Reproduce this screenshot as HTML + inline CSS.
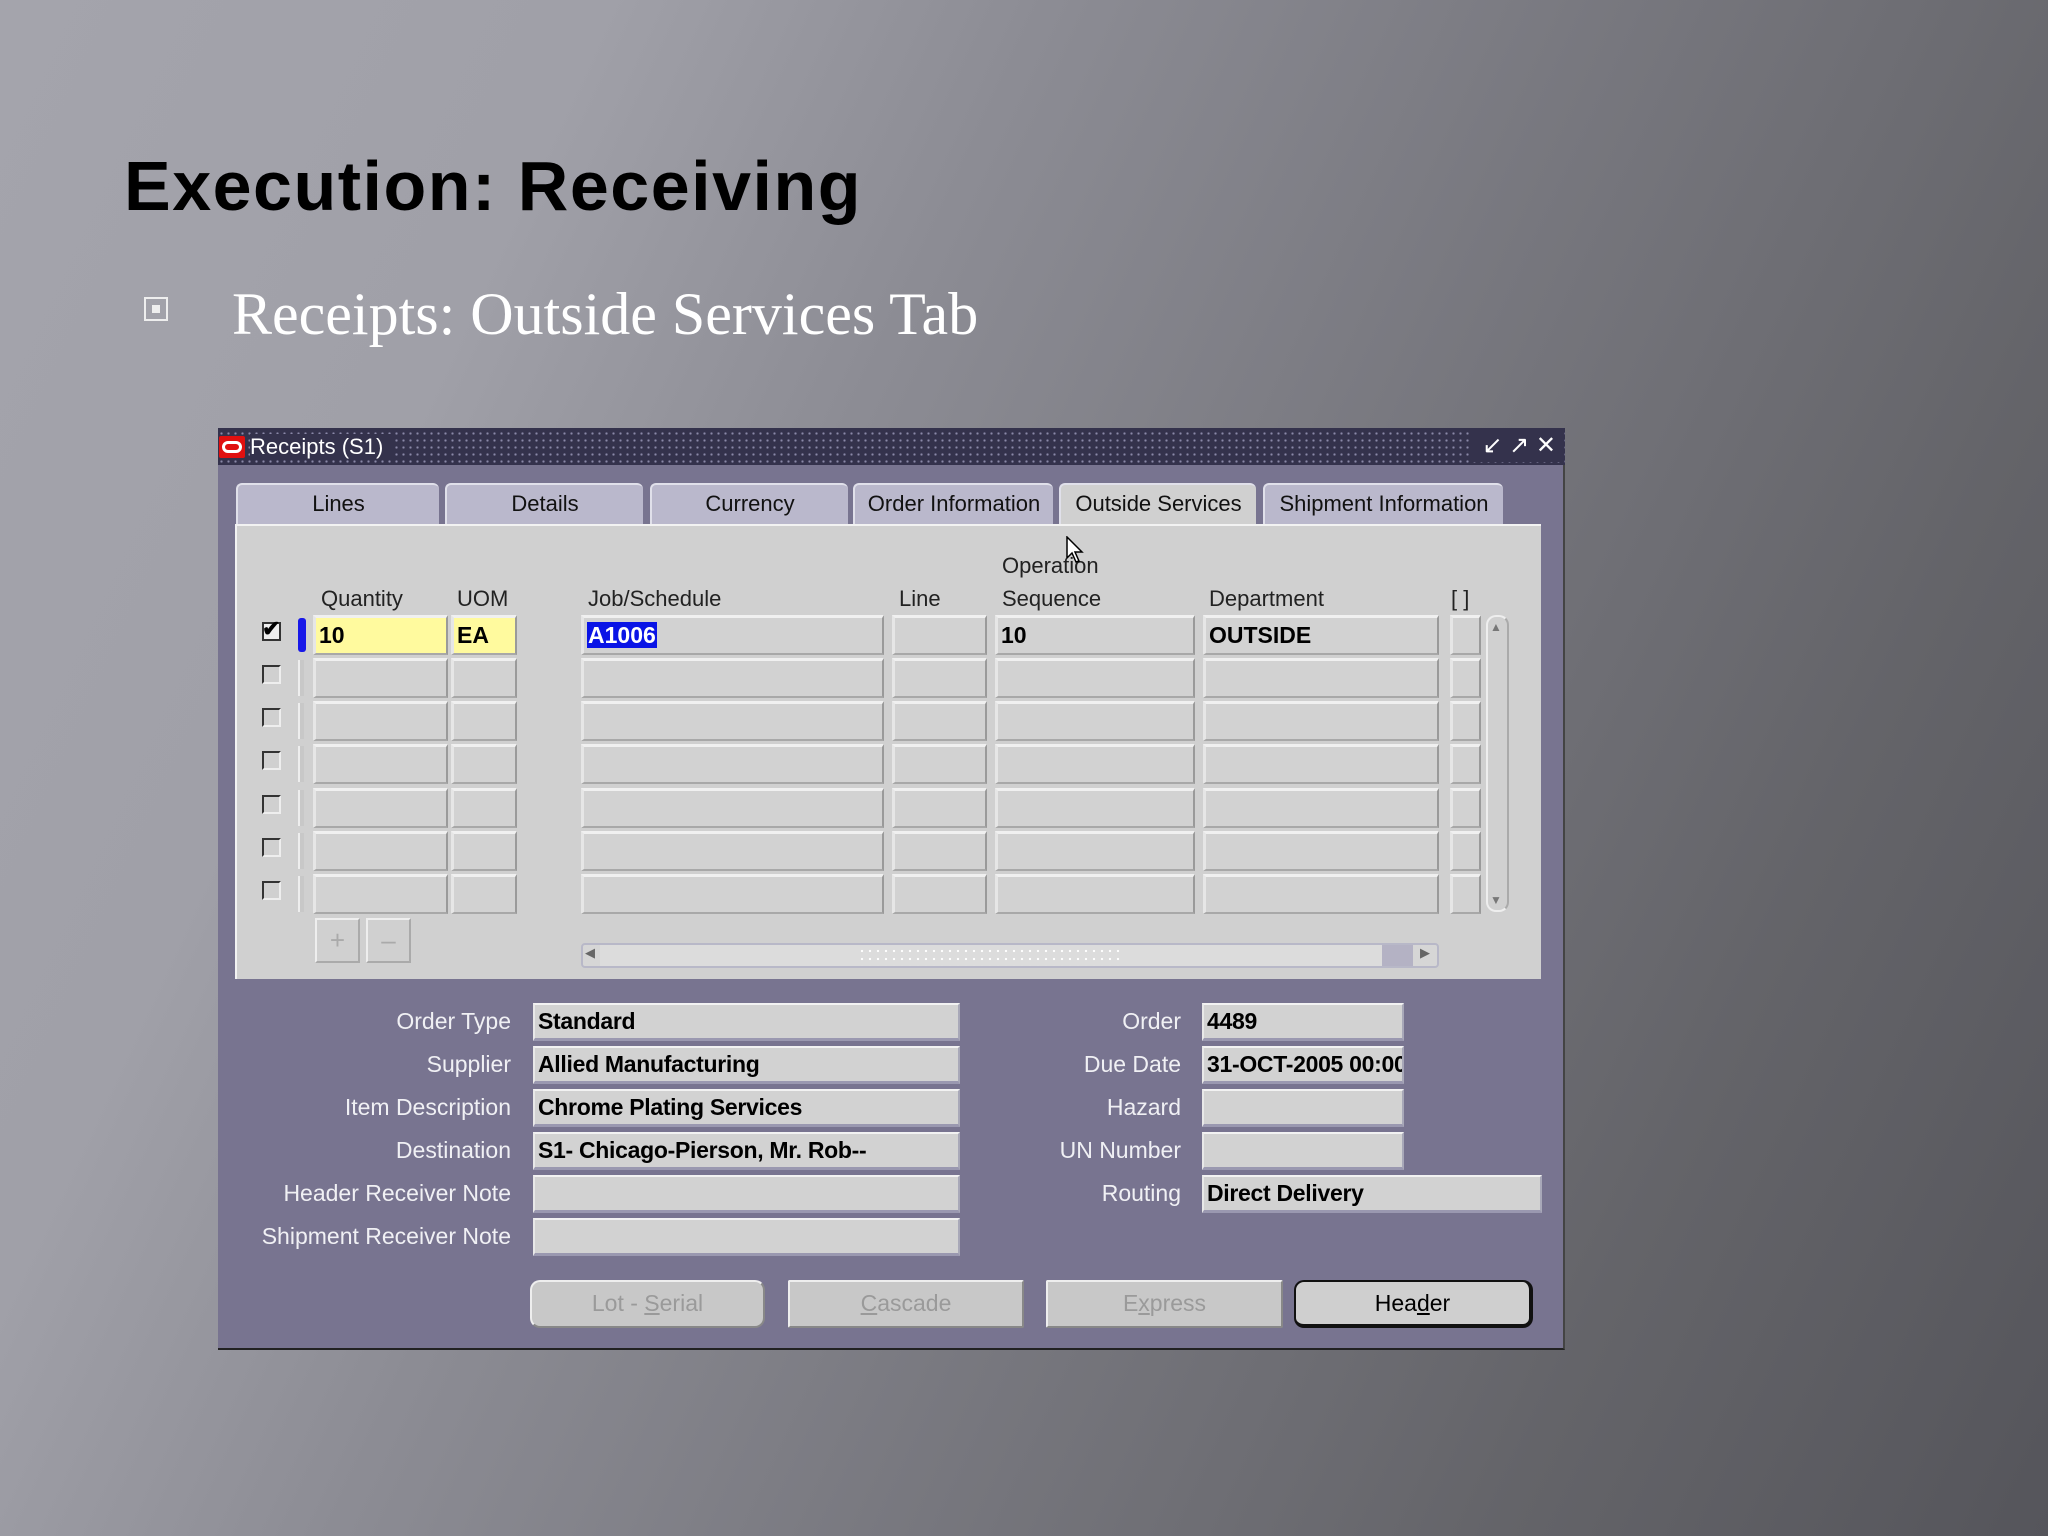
<!DOCTYPE html>
<html><head><meta charset="utf-8"><style>
*{margin:0;padding:0;box-sizing:border-box}
body{width:2048px;height:1536px;overflow:hidden;position:relative;
background:linear-gradient(115deg,#a4a4ac 0%,#a0a0a8 22%,#8c8c94 38%,#78787f 58%,#646469 80%,#55555b 100%);font-family:"Liberation Sans Narrow","Liberation Sans",sans-serif}
.a{position:absolute}
.h1{left:124px;top:146px;font:bold 70px "Liberation Sans",sans-serif;color:#000;letter-spacing:1.5px;white-space:nowrap}
.h2{left:232px;top:280px;font:60px "Liberation Serif",serif;color:#fff;white-space:nowrap}
.win{left:218px;top:428px;width:1347px;height:922px;background:#787490;border-right:2px solid #444;border-bottom:2px solid #222}
.tb{left:218px;top:428px;width:1347px;height:37px;background:#34324c;
background-image:radial-gradient(#8a88a8 1px,transparent 1.3px);background-size:7px 7px;background-position:0 2px}
.tt{left:250px;top:434px;color:#fff;font-size:22px;background:#34324c;padding-right:8px}
.tab{background:#bab8cc;border-radius:6px 6px 0 0;border-top:2px solid #e0e0ea;border-left:2px solid #e0e0ea;height:41px;top:483px;text-align:center;font-size:22px;line-height:38px;color:#111}
.pan{left:235px;top:524px;width:1306px;height:455px;background:#d0d0d0;border-top:2px solid #f2f2f2;border-left:2px solid #f2f2f2}
.c{background:#d2d2d2;border-top:3px solid #f0f0f0;border-left:3px solid #e6e6e6;border-right:2px solid #9a9a9a;border-bottom:2px solid #a8a8a8;height:40px;font-weight:bold;font-size:23px;line-height:34px;padding-left:3px;color:#000}
.y{background:#fffa9e}
.lb{font-size:22px;color:#222}
.f{background:#d2d2d2;border-top:2px solid #f2f2f2;border-left:2px solid #e8e8e8;border-bottom:3px solid #9a98b0;border-right:2px solid #a8a8b8;height:38px;font-weight:bold;font-size:23px;line-height:32px;padding-left:3px;color:#000;white-space:nowrap;overflow:hidden;letter-spacing:-0.3px}
.fl{font-size:23px;color:#f0f0f4;text-align:right;white-space:nowrap}
.cb{width:19px;height:19px;border:2px solid #333;border-right-color:#eee;border-bottom-color:#eee;background:#d0d0d0}
.btn{top:1280px;height:48px;background:#c8c8c8;border:2px solid #eee;border-right-color:#888;border-bottom-color:#888;border-radius:10px;text-align:center;font-size:23px;line-height:42px;color:#9a9a9a}
</style></head><body>
<div class="a h1">Execution: Receiving</div>
<div class="a" style="left:144px;top:297px;width:24px;height:24px;border:2px solid #eee"><div style="position:absolute;left:6px;top:6px;width:8px;height:8px;background:#eee"></div></div>
<div class="a h2">Receipts: Outside Services Tab</div>

<div class="a win"></div>
<div class="a tb"></div>
<div class="a" style="left:219px;top:436px;width:26px;height:22px;background:#e01010;border-radius:2px"><div style="position:absolute;left:3px;top:5px;width:20px;height:12px;border:3px solid #fff;border-radius:6px"></div></div>
<div class="a tt">Receipts (S1)</div>
<div class="a" style="left:1470px;top:430px;width:92px;height:32px;background:#34324c;color:#fff;font-size:24px;line-height:32px;text-align:right;padding-right:6px">&#8601;&nbsp;&#8599;&nbsp;&#10005;</div>

<div class="a tab" style="left:236px;width:203px">Lines</div>
<div class="a tab" style="left:445px;width:198px">Details</div>
<div class="a tab" style="left:650px;width:198px">Currency</div>
<div class="a tab" style="left:853px;width:200px">Order Information</div>
<div class="a tab" style="left:1059px;width:197px;background:#d0d0d0;height:44px">Outside Services</div>
<div class="a tab" style="left:1263px;width:240px">Shipment Information</div>

<div class="a pan"></div>
<div class="a lb" style="left:1002px;top:553px">Operation</div>
<div class="a lb" style="left:321px;top:586px">Quantity</div>
<div class="a lb" style="left:457px;top:586px">UOM</div>
<div class="a lb" style="left:588px;top:586px">Job/Schedule</div>
<div class="a lb" style="left:899px;top:586px">Line</div>
<div class="a lb" style="left:1002px;top:586px">Sequence</div>
<div class="a lb" style="left:1209px;top:586px">Department</div>
<div class="a lb" style="left:1451px;top:586px">[ ]</div>
<svg class="a" style="left:1066px;top:536px" width="20" height="28"><path d="M1 1 L1 22 L6 17 L10 26 L13 25 L9 16 L16 16 Z" fill="#fff" stroke="#000" stroke-width="1.5"/></svg>

<div class="a cb" style="left:262px;top:622px;border-color:#333;background:#eee"></div>
<div class="a" style="left:262px;top:616px;font-size:22px;font-weight:bold">&#10004;</div>
<div class="a" style="left:298px;top:618px;width:8px;height:34px;background:#1818e8;border-radius:3px"></div>
<div class="a c y" style="left:313px;top:615px;width:135px">10</div>
<div class="a c y" style="left:451px;top:615px;width:66px">EA</div>
<div class="a c" style="left:581px;top:615px;width:303px"><span style="background:#0a14e6;color:#fff;padding:0 1px">A1006</span></div>
<div class="a c" style="left:892px;top:615px;width:95px"></div>
<div class="a c" style="left:995px;top:615px;width:200px">10</div>
<div class="a c" style="left:1203px;top:615px;width:236px">OUTSIDE</div>
<div class="a c" style="left:1450px;top:615px;width:31px"></div>

<div class="a cb" style="left:262px;top:665px"></div><div class="a" style="left:298px;top:660px;width:6px;height:36px;background:#c8c8c8;border-left:2px solid #eee"></div><div class="a c" style="left:313px;top:658px;width:135px"></div><div class="a c" style="left:451px;top:658px;width:66px"></div><div class="a c" style="left:581px;top:658px;width:303px"></div><div class="a c" style="left:892px;top:658px;width:95px"></div><div class="a c" style="left:995px;top:658px;width:200px"></div><div class="a c" style="left:1203px;top:658px;width:236px"></div><div class="a c" style="left:1450px;top:658px;width:31px"></div>
<div class="a cb" style="left:262px;top:708px"></div><div class="a" style="left:298px;top:703px;width:6px;height:36px;background:#c8c8c8;border-left:2px solid #eee"></div><div class="a c" style="left:313px;top:701px;width:135px"></div><div class="a c" style="left:451px;top:701px;width:66px"></div><div class="a c" style="left:581px;top:701px;width:303px"></div><div class="a c" style="left:892px;top:701px;width:95px"></div><div class="a c" style="left:995px;top:701px;width:200px"></div><div class="a c" style="left:1203px;top:701px;width:236px"></div><div class="a c" style="left:1450px;top:701px;width:31px"></div>
<div class="a cb" style="left:262px;top:751px"></div><div class="a" style="left:298px;top:746px;width:6px;height:36px;background:#c8c8c8;border-left:2px solid #eee"></div><div class="a c" style="left:313px;top:744px;width:135px"></div><div class="a c" style="left:451px;top:744px;width:66px"></div><div class="a c" style="left:581px;top:744px;width:303px"></div><div class="a c" style="left:892px;top:744px;width:95px"></div><div class="a c" style="left:995px;top:744px;width:200px"></div><div class="a c" style="left:1203px;top:744px;width:236px"></div><div class="a c" style="left:1450px;top:744px;width:31px"></div>
<div class="a cb" style="left:262px;top:795px"></div><div class="a" style="left:298px;top:790px;width:6px;height:36px;background:#c8c8c8;border-left:2px solid #eee"></div><div class="a c" style="left:313px;top:788px;width:135px"></div><div class="a c" style="left:451px;top:788px;width:66px"></div><div class="a c" style="left:581px;top:788px;width:303px"></div><div class="a c" style="left:892px;top:788px;width:95px"></div><div class="a c" style="left:995px;top:788px;width:200px"></div><div class="a c" style="left:1203px;top:788px;width:236px"></div><div class="a c" style="left:1450px;top:788px;width:31px"></div>
<div class="a cb" style="left:262px;top:838px"></div><div class="a" style="left:298px;top:833px;width:6px;height:36px;background:#c8c8c8;border-left:2px solid #eee"></div><div class="a c" style="left:313px;top:831px;width:135px"></div><div class="a c" style="left:451px;top:831px;width:66px"></div><div class="a c" style="left:581px;top:831px;width:303px"></div><div class="a c" style="left:892px;top:831px;width:95px"></div><div class="a c" style="left:995px;top:831px;width:200px"></div><div class="a c" style="left:1203px;top:831px;width:236px"></div><div class="a c" style="left:1450px;top:831px;width:31px"></div>
<div class="a cb" style="left:262px;top:881px"></div><div class="a" style="left:298px;top:876px;width:6px;height:36px;background:#c8c8c8;border-left:2px solid #eee"></div><div class="a c" style="left:313px;top:874px;width:135px"></div><div class="a c" style="left:451px;top:874px;width:66px"></div><div class="a c" style="left:581px;top:874px;width:303px"></div><div class="a c" style="left:892px;top:874px;width:95px"></div><div class="a c" style="left:995px;top:874px;width:200px"></div><div class="a c" style="left:1203px;top:874px;width:236px"></div><div class="a c" style="left:1450px;top:874px;width:31px"></div>

<div class="a" style="left:1486px;top:615px;width:23px;height:297px;background:#d0d0d0;border:2px solid #eee;border-radius:10px;border-right-color:#aaa"></div>
<div class="a" style="left:1490px;top:620px;font-size:12px;color:#777">&#9650;</div>
<div class="a" style="left:1490px;top:893px;font-size:12px;color:#777">&#9660;</div>
<div class="a" style="left:315px;top:918px;width:45px;height:45px;background:#d0d0d0;border:2px solid #eee;border-right-color:#aaa;border-bottom-color:#aaa;text-align:center;font-size:26px;color:#aaa;line-height:40px">+</div>
<div class="a" style="left:366px;top:918px;width:45px;height:45px;background:#d0d0d0;border:2px solid #eee;border-right-color:#aaa;border-bottom-color:#aaa;text-align:center;font-size:26px;color:#aaa;line-height:40px">&#8211;</div>
<div class="a" style="left:581px;top:943px;width:858px;height:25px;background:#d6d6d6;border:2px solid #b8b8c8;border-radius:4px"></div>
<div class="a" style="left:600px;top:945px;width:782px;height:21px;background:#dcdcdc;background-image:radial-gradient(#fff 1px,transparent 1.3px);background-size:8px 8px;background-position:0 2px;border-left:2px solid #eee"></div>
<div class="a" style="left:600px;top:945px;width:260px;height:21px;background:#dcdcdc"></div>
<div class="a" style="left:1120px;top:945px;width:262px;height:21px;background:#dcdcdc"></div>
<div class="a" style="left:1382px;top:945px;width:31px;height:21px;background:#b4b2c4"></div>
<div class="a" style="left:585px;top:945px;font-size:13px;color:#666">&#9664;</div>
<div class="a" style="left:1420px;top:945px;font-size:13px;color:#666">&#9654;</div>

<div class="a fl" style="right:1537px;top:1008px">Order Type</div>
<div class="a fl" style="right:1537px;top:1051px">Supplier</div>
<div class="a fl" style="right:1537px;top:1094px">Item Description</div>
<div class="a fl" style="right:1537px;top:1137px">Destination</div>
<div class="a fl" style="right:1537px;top:1180px">Header Receiver Note</div>
<div class="a fl" style="right:1537px;top:1223px">Shipment Receiver Note</div>
<div class="a f" style="left:533px;top:1003px;width:427px">Standard</div>
<div class="a f" style="left:533px;top:1046px;width:427px">Allied Manufacturing</div>
<div class="a f" style="left:533px;top:1089px;width:427px">Chrome Plating Services</div>
<div class="a f" style="left:533px;top:1132px;width:427px">S1- Chicago-Pierson, Mr. Rob--</div>
<div class="a f" style="left:533px;top:1175px;width:427px"></div>
<div class="a f" style="left:533px;top:1218px;width:427px"></div>
<div class="a fl" style="right:867px;top:1008px">Order</div>
<div class="a fl" style="right:867px;top:1051px">Due Date</div>
<div class="a fl" style="right:867px;top:1094px">Hazard</div>
<div class="a fl" style="right:867px;top:1137px">UN Number</div>
<div class="a fl" style="right:867px;top:1180px">Routing</div>
<div class="a f" style="left:1202px;top:1003px;width:202px">4489</div>
<div class="a f" style="left:1202px;top:1046px;width:202px">31-OCT-2005 00:00</div>
<div class="a f" style="left:1202px;top:1089px;width:202px"></div>
<div class="a f" style="left:1202px;top:1132px;width:202px"></div>
<div class="a f" style="left:1202px;top:1175px;width:340px">Direct Delivery</div>

<div class="a btn" style="left:530px;width:235px">Lot - <u>S</u>erial</div>
<div class="a btn" style="left:788px;width:236px;border-radius:2px"><u>C</u>ascade</div>
<div class="a btn" style="left:1046px;width:237px;border-radius:2px">E<u>x</u>press</div>
<div class="a btn" style="left:1294px;width:239px;color:#000;border:2px solid #111;border-right:4px solid #111;border-bottom:4px solid #111;background:#cfcfcf">Hea<u>d</u>er</div>
</body></html>
